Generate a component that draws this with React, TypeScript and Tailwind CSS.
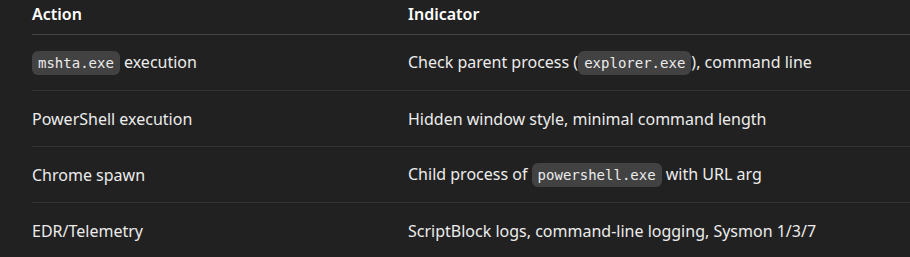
import type { ReactNode } from "react";

function Code({ children }: { children: ReactNode }) {
  return (
    <code className="inline-block rounded-md bg-[#424242] px-[6px] leading-6 text-[14px] font-normal text-[#ececec] [font-family:'DejaVu_Sans_Mono',monospace] align-middle">
      {children}
    </code>
  );
}

const rows: { action: ReactNode; indicator: ReactNode }[] = [
  {
    action: (
      <>
        <Code>mshta.exe</Code> execution
      </>
    ),
    indicator: (
      <>
        Check parent process (<Code>explorer.exe</Code>), command line
      </>
    ),
  },
  {
    action: "PowerShell execution",
    indicator: "Hidden window style, minimal command length",
  },
  {
    action: "Chrome spawn",
    indicator: (
      <>
        Child process of <Code>powershell.exe</Code> with URL arg
      </>
    ),
  },
  {
    action: "EDR/Telemetry",
    indicator: "ScriptBlock logs, command-line logging, Sysmon 1/3/7",
  },
];

export default function App() {
  return (
    <main className="min-h-screen w-[910px] bg-[#212121] pl-8 text-[16px] text-[#ececec] [font-family:'Noto_Sans',sans-serif]">
      {/* Header */}
      <div className="grid h-[35px] grid-cols-[376px_1fr] border-b border-[#444444] pb-2 font-semibold text-white">
        <div className="self-end leading-6">Action</div>
        <div className="self-end leading-6">Indicator</div>
      </div>

      {/* Rows */}
      {rows.map((row, i) => (
        <div
          key={i}
          className="grid h-[56px] grid-cols-[376px_1fr] items-center border-b border-[#333333]"
        >
          <div className="leading-6">{row.action}</div>
          <div className="leading-6">{row.indicator}</div>
        </div>
      ))}
    </main>
  );
}
